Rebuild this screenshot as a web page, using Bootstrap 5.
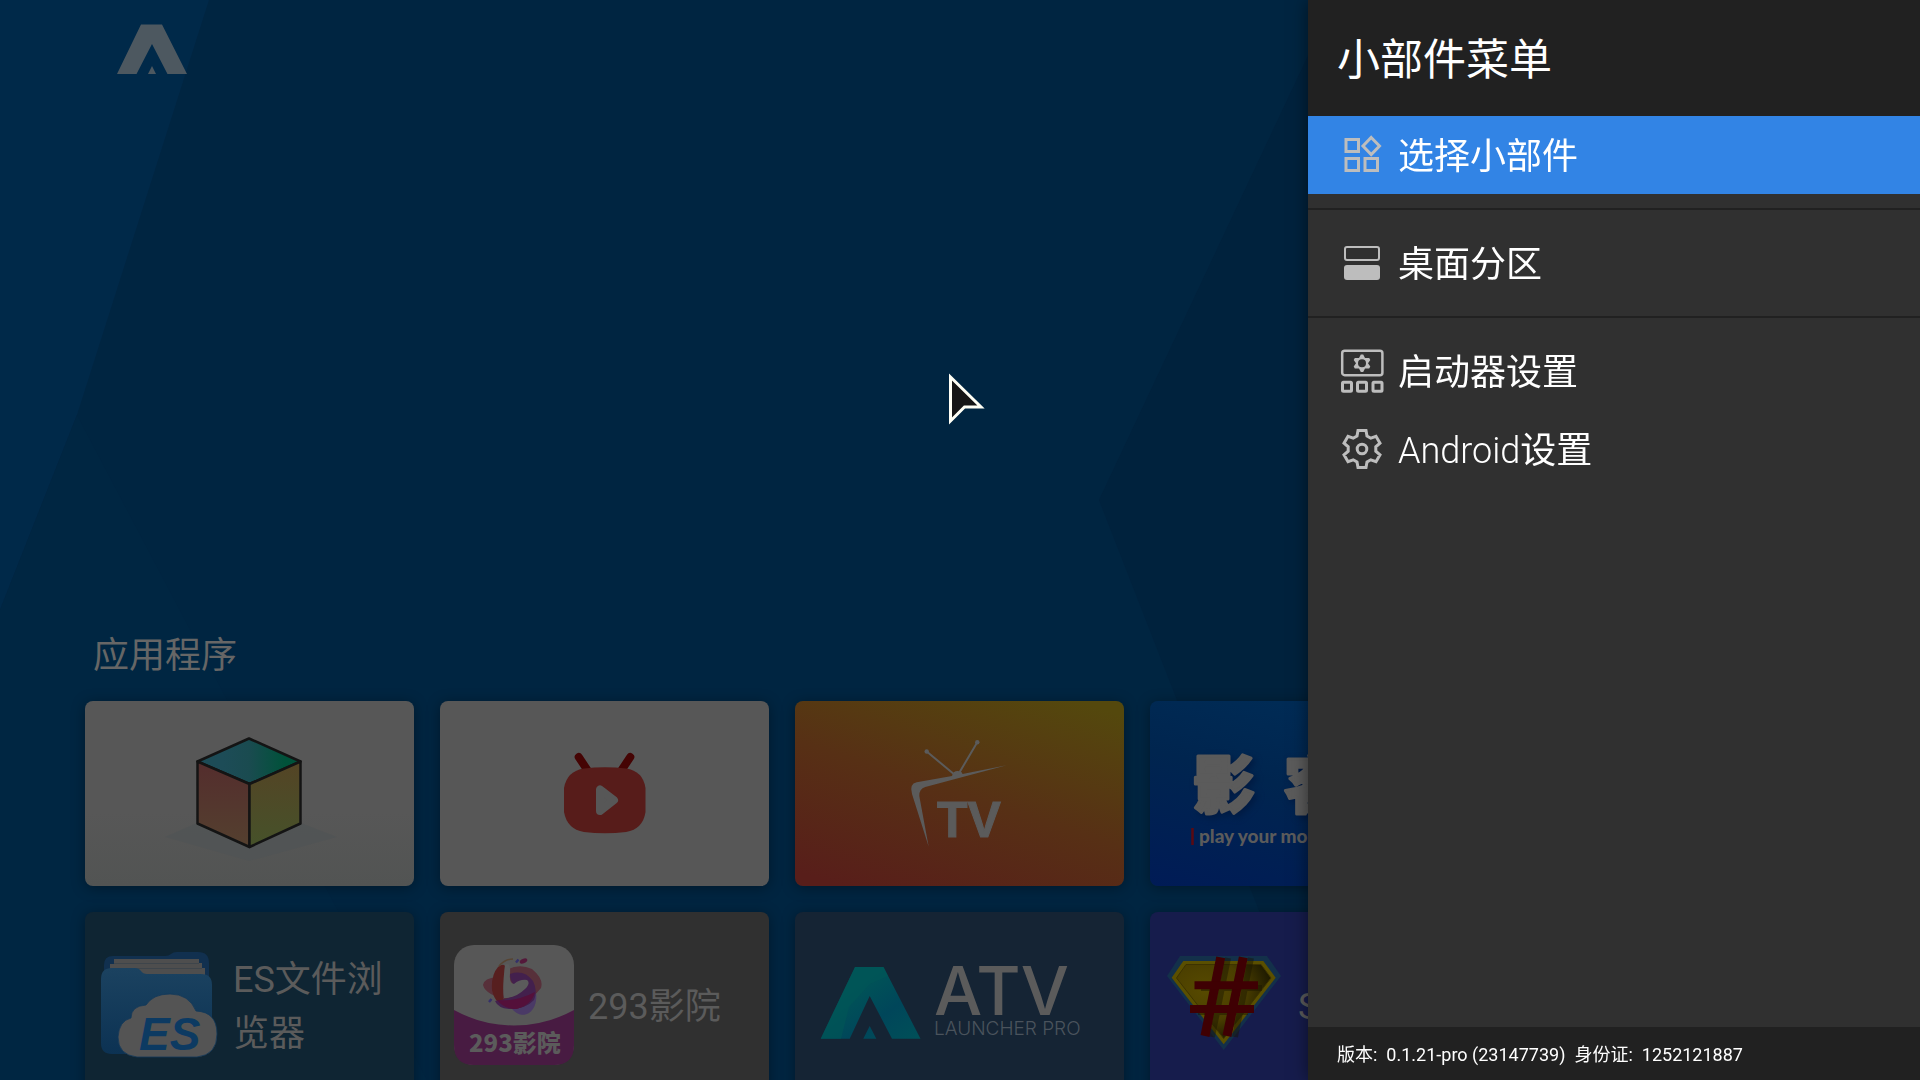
<!DOCTYPE html>
<html lang="zh-CN">
<head>
<meta charset="utf-8">
<meta name="viewport" content="width=device-width, initial-scale=1">
<title>小部件菜单</title>
<link href="https://cdn.jsdelivr.net/npm/bootstrap@5.3.0/dist/css/bootstrap.min.css" rel="stylesheet">
<style>
  body { font-family: Roboto, "Noto Sans CJK SC", sans-serif; background: #002541; color: #5b5b5b; }
  a { color: inherit; text-decoration: none; }
  .wallpaper { z-index: 0; }
  .launcher { z-index: 1; padding: 0 85px; }
  .brand-bar { height: 98px; padding: 24px 32px; }
  .widget-area { height: 531px; }
  .section-title { font-size: 36px; line-height: 54px; margin: 0 0 18px; padding-left: 8px; color: #666; font-weight: 400; }
  .tiles { display: grid; grid-template-columns: repeat(4, 329px); grid-auto-rows: 185px; gap: 26px; }
  .tile { border-radius: 8px; overflow: hidden; box-shadow: 0 2px 14px rgba(0, 0, 0, .35); font-size: 36px; line-height: 54px; }
  .tile-app { padding: 0 14px; gap: 14px; }
  .tile-app span { padding-top: 4px; }
  .tile-cube { background: linear-gradient(#575757 60%, #525453); }
  .tile-video { background: #575757; }
  .tile-tv { background: linear-gradient(18deg, #581e1a 5%, #573015 50%, #54480d 95%); }
  .tile-player { background: linear-gradient(15deg, #001b56, #00254f 50%, #002f59); }
  .tile-es { background: #0f2533; }
  .tile-cinema { background: #303030; }
  .tile-atv { background: #152434; }
  .tile-su { background: #161c4c; }
  .side-menu { z-index: 3; width: 612px; background: #303030; color: #fff; box-shadow: 0 0 16px rgba(0, 0, 0, .5); }
  .side-head { height: 116px; padding: 4px 29px 0; background: #212121; }
  .side-head h1 { font-size: 43px; line-height: 64px; font-weight: 400; margin: 0; }
  .menu-row { height: 78px; padding: 0 29px; gap: 11px; border: 0; background: transparent; color: #fff; font-size: 36px; line-height: 54px; text-align: left; }
  .menu-row > span { padding-top: 4px; }
  .menu-row.selected { background: #3284e5; }
  .menu-row svg { color: #bdbdbd; }
  .menu-line { height: 2px; margin: 14px 0; border: 0; opacity: 1; background: #212121; }
  .side-foot { height: 53px; padding: 2px 29px 0; gap: 9px; background: #212121; font-size: 18px; line-height: 27px; }
  .pointer { z-index: 4; left: 946px; top: 370px; }
  .t-bold { font-family: "Liberation Sans", sans-serif; font-weight: 700; }
  .t-wide { font-family: Inter, sans-serif; }
  .t-cjk { font-family: "Noto Sans CJK SC", sans-serif; font-weight: 900; }
  .t-lato { font-family: Lato, sans-serif; font-weight: 900; }
  .t-shade { filter: drop-shadow(3px 3px 3px #001a42); }
</style>
<script src="https://cdn.jsdelivr.net/npm/bootstrap@5.3.0/dist/js/bootstrap.bundle.min.js"></script>
</head>
<body class="vh-100 overflow-hidden position-relative">

<svg class="wallpaper position-absolute top-0 start-0 w-100 h-100" viewBox="0 0 1920 1080" preserveAspectRatio="xMinYMin slice" aria-hidden="true">
  <path d="M0 0H209L77 415L0 610Z" fill="#002949"/>
  <path d="M77 415L0 610V1080H427Z" fill="#002642"/>
  <path d="M1320 30L1099 500L1325 1080H1920V0Z" fill="#00223d"/>
</svg>

<main class="launcher position-relative">
  <header class="brand-bar">
    <svg class="d-block" width="70" height="50" viewBox="0 0 70 50" role="img" aria-label="ATV Launcher"><path fill="#4d5860" d="M24 .5H45L70 50H50.500L35 20L19.500 50H0ZM35 42L39 50H31Z"/></svg>
  </header>
  <div class="widget-area"></div>
  <section aria-labelledby="apps">
    <h2 class="section-title" id="apps">应用程序</h2>
    <div class="tiles">
      <a href="#" class="tile tile-cube d-block" aria-label="Cube">
        <svg class="d-block" width="329" height="185" viewBox="0 0 329 185">
          <defs>
            <linearGradient id="ct" x1="0" x2="1"><stop offset=".25" stop-color="#1d4c57"/><stop offset=".5" stop-color="#1a4b50"/><stop offset=".85" stop-color="#00523a"/></linearGradient>
            <linearGradient id="cl" x1="0" y1="0" x2="0" y2="1"><stop offset="0" stop-color="#542d2d"/><stop offset="1" stop-color="#54402f"/></linearGradient>
            <linearGradient id="cr" x1="0" y1="0" x2="0" y2="1"><stop offset="0" stop-color="#544425"/><stop offset="1" stop-color="#46522a"/></linearGradient>
          </defs>
          <path d="M80 136L112 122L164 146L216 122L252 136L164 160Z" fill="#505455" opacity=".7"/>
          <g stroke="#141414" stroke-width="2.500" stroke-linejoin="round">
            <path fill="url(#ct)" d="M164 37.500L215.500 60.500L164.500 83L112.500 60.500Z"/>
            <path fill="url(#cl)" d="M112.500 60.500L164.500 83V146L112.500 122.500Z"/>
            <path fill="url(#cr)" d="M215.500 60.500L164.500 83V146L215.500 122.500Z"/>
          </g>
        </svg>
      </a>
      <a href="#" class="tile tile-video d-block" aria-label="Video">
        <svg class="d-block" width="329" height="185" viewBox="0 0 329 185">
          <path d="M138.700 56L148 70M190.300 56L181 70" stroke="#450404" stroke-width="8" stroke-linecap="round"/>
          <path fill="#571c1a" d="M144 67.500Q165 65 186 67.500Q203 70 205.500 87V111Q203 128 186 131Q165 133.500 144 131Q127 128 124 111V87Q127 70 144 67.500Z"/>
          <path fill="#575757" stroke="#575757" stroke-width="8" stroke-linejoin="round" d="M160 88.500V110L174 99.200Z"/>
        </svg>
      </a>
      <a href="#" class="tile tile-tv d-block" aria-label="TV">
        <svg class="d-block" width="329" height="185" viewBox="0 0 329 185" fill="#5b5b5b">
          <path d="M131.700 50.500L160 74M182.300 41.300L163.500 73" stroke="#5b5b5b" stroke-width="2"/>
          <circle cx="131.700" cy="50.500" r="2.200"/><circle cx="182.300" cy="41.300" r="2.200"/>
          <path d="M157 75Q158 70 162.500 70Q167 70 167.500 73L211.700 64.300L130.300 86Q124 88 124.300 95L133.700 145.700L117 93Q114 83 121.700 81.300Z"/>
          <text class="t-bold" x="142" y="136" font-size="50" stroke="#5b5b5b">TV</text>
        </svg>
      </a>
      <a href="#" class="tile tile-player d-block" aria-label="影客">
        <svg class="d-block" width="329" height="185" viewBox="0 0 329 185">
          <g class="t-cjk t-shade" font-size="62" fill="#5b5b5b" stroke="#5b5b5b" stroke-width="3" stroke-linejoin="round"><text x="43" y="107">影</text><text x="134" y="107">客</text></g>
          <path d="M42.500 127V144" stroke="#5a0a12" stroke-width="2.500"/>
          <text class="t-lato" x="49" y="142" font-size="19" fill="#5b5b5b">play your mo</text>
        </svg>
      </a>

      <a href="#" class="tile tile-app tile-es d-flex align-items-center">
        <svg class="flex-shrink-0" width="120" height="120" viewBox="0 0 120 120" aria-hidden="true">
          <defs><linearGradient id="ef" x1="0" y1="0" x2="0" y2="1"><stop offset="0" stop-color="#1b4260"/><stop offset="1" stop-color="#0c3253"/></linearGradient></defs>
          <path fill="#11304f" d="M5 40V20Q5 11 14 11H66Q70 11 72 9Q74 7 78 7H99Q110 7 110 18V60H5Z"/>
          <path fill="#4e4e4e" d="M15 14H100V18H103V23H106V40H11V19H15Z"/>
          <path d="M15 18.500H100M11 23.500H103" stroke="#3e454b" stroke-width="1"/>
          <path fill="url(#ef)" d="M2 34Q2 23 13 23H36Q40 23 42 26Q44 29 48 29H102Q113 29 113 40V98Q113 109 102 109H13Q2 109 2 98Z"/>
          <path fill="#545454" stroke="#12395a" stroke-width=".8" d="M38 112Q19 110 19 92Q20 76 32 73Q32 61 47 60Q54 49 71 49Q90 49 97 66Q118 67 118 89Q118 110 98 112Z"/>
          <text class="t-bold" font-style="italic" x="40" y="105" font-size="46" fill="#0c3a62">ES</text>
        </svg>
        <span>ES文件浏览器</span>
      </a>
      <a href="#" class="tile tile-app tile-cinema d-flex align-items-center">
        <svg class="flex-shrink-0" width="120" height="120" viewBox="0 0 120 120" aria-hidden="true">
          <rect width="120" height="120" rx="20" fill="#575757"/>
          <path fill="#481b42" d="M0 65Q28 80.500 60 80.500T120 65V100Q120 120 100 120H20Q0 120 0 100Z"/>
          <ellipse cx="67" cy="49" rx="15" ry="21" fill="#4a3a66" transform="rotate(-12 67 49)"/>
          <path fill="#57303a" d="M29 40Q30 33 43 32Q60 16 78 24Q90 34 87 43Q80 53 64 57Q32 52 29 40Z"/>
          <path fill="#571f1f" d="M44 22Q49 18 51 21L49 54Q60 54 70 47Q80 40 81 47Q80 60 62 64Q42 64 38 45Q37 30 44 22Z"/>
          <path fill="#43204d" d="M56 29Q70 24 79 36Q84 46 80 55Q72 64 55 64Q44 63 41 56Q60 54 73 40Q68 35 60 40Q56 36 56 29Z"/>
          <path fill="#54103a" d="M43 55Q62 57 81 47Q78 60 62 64Q50 64 43 55Z"/>
          <path fill="#5b5b5b" d="M51 20Q57 16 56 29Q55 38 60 39Q66 34 73 35Q77 38 71 44Q62 53 50 53Q48 44 51 20Z"/>
          <path d="M45 21Q51 14 59 14" stroke="#574432" stroke-width="1.500" fill="none"/>
          <ellipse cx="69.500" cy="16" rx="4" ry="2.300" fill="#54183a" transform="rotate(-25 69.500 16)"/>
          <path d="M62 17.500L64.500 14.500M35 57L37.500 54" stroke="#35306a" stroke-width="2.500"/>
          <text x="15" y="107" class="t-cjk" font-size="24" fill="#5b5b5b">293影院</text>
        </svg>
        <span>293影院</span>
      </a>
      <a href="#" class="tile tile-atv d-block" aria-label="ATV Launcher Pro">
        <svg class="d-block" width="329" height="185" viewBox="0 0 329 185">
          <defs><linearGradient id="al" x1="0" y1="0" x2="1" y2="1"><stop offset=".3" stop-color="#005457"/><stop offset=".65" stop-color="#00465a"/><stop offset="1" stop-color="#005058"/></linearGradient></defs>
          <path fill="url(#al)" d="M60 55H88.500L125.500 126.700H97L74.700 84L54.700 126.700H25.700ZM74.700 114L81.300 126.700H68.300Z"/>
          <path fill="#005656" d="M60 55H88.500L93 64L74.700 72L54 95L46 126.700H25.700Z" opacity=".6"/>
          <text class="t-wide" x="139" y="103" font-size="68" font-weight="500" fill="#5b5b5b">ATV</text>
          <text class="t-wide" x="139" y="123" font-size="19" font-weight="300" fill="#4a535c">LAUNCHER PRO</text>
        </svg>
      </a>
      <a href="#" class="tile tile-app tile-su d-flex align-items-center">
        <svg class="flex-shrink-0" width="120" height="120" viewBox="0 0 120 120" aria-hidden="true">
          <defs><radialGradient id="sg" cx=".3" cy=".35" r=".7"><stop offset="0" stop-color="#574a00"/><stop offset=".6" stop-color="#4a3e00"/><stop offset="1" stop-color="#1f1b00"/></radialGradient></defs>
          <path fill="#13304a" d="M16 11H103L117 31L59.700 105L3 31Z"/>
          <path fill="#5a4f00" d="M19.300 16H99.300L111.700 32.700L59.700 99.300L7.700 32.700Z"/>
          <path fill="url(#sg)" stroke="#3d3300" d="M22 19.500H97L107 33L59.700 93.500L12.500 33Z"/>
          <path d="M64 13L48 92M87 13L71 92M37 43H98M34 67H84" stroke="#1a1500" stroke-width="6" opacity=".45"/>
          <path d="M56.700 12.300L41 91M79.300 12.300L63 91" stroke="#3f0003" stroke-width="9"/>
          <path d="M30.500 40.200H94M26 64H90" stroke="#3f0003" stroke-width="8"/>
        </svg>
        <span>S</span>
      </a>
    </div>
  </section>
</main>

<aside class="side-menu position-fixed top-0 end-0 h-100 d-flex flex-column" aria-label="小部件菜单">
  <div class="side-head d-flex align-items-center"><h1>小部件菜单</h1></div>
  <nav class="flex-grow-1 d-flex flex-column">
    <button type="button" class="menu-row selected d-flex align-items-center w-100">
      <svg width="50" height="50" viewBox="-2 -2 50 50" fill="none" stroke="currentColor" stroke-width="3" aria-hidden="true">
        <path d="M7 7.500H19.500V19.500H7ZM7 26.500H19.500V38.500H7ZM26 26.500H38.500V38.500H26ZM32.200 5.500L40.500 14L32.200 22.500L24 14Z"/>
      </svg>
      <span>选择小部件</span>
    </button>
    <hr class="menu-line">
    <button type="button" class="menu-row d-flex align-items-center w-100">
      <svg width="50" height="50" viewBox="-2 -2 50 50" aria-hidden="true"><rect x="6" y="7" width="34" height="13" rx="2" fill="none" stroke="currentColor" stroke-width="2"/><rect x="5" y="25" width="36" height="15" rx="3" fill="currentColor"/></svg>
      <span>桌面分区</span>
    </button>
    <hr class="menu-line">
    <button type="button" class="menu-row d-flex align-items-center w-100">
      <svg width="50" height="50" viewBox="-2 -2 50 50" fill="none" stroke="currentColor" aria-hidden="true">
        <rect x="3.200" y="2.700" width="40.200" height="24.500" rx="2.500" stroke-width="2.500"/>
        <g stroke-width="3"><rect x="3.500" y="34.300" width="9" height="9" rx="1"/><rect x="18.500" y="34.300" width="9" height="9" rx="1"/><rect x="34" y="34.300" width="9" height="9" rx="1"/></g>
        <path transform="translate(23 15.300)" fill="currentColor" fill-rule="evenodd" stroke="none" d="M-1.200-8.800H1.200L3-5.200L7.200-5.200L8.300-3.200L6 0L8.300 3.200L7.200 5.200L3 5.200L1.200 8.800H-1.200L-3 5.200L-7.200 5.200L-8.300 3.200L-6 0L-8.300-3.200L-7.200-5.200L-3-5.200ZM0-4A4 4 0 1 0 0 4A4 4 0 1 0 0-4Z"/>
      </svg>
      <span>启动器设置</span>
    </button>
    <button type="button" class="menu-row d-flex align-items-center w-100">
      <svg width="50" height="50" viewBox="-25 -25 50 50" fill="none" stroke="currentColor" stroke-width="3" aria-hidden="true">
        <path d="M-5-13L-4-18.500H4L5-13L8.800-10.800L14-12.700L18-5.800L13.800-2.200V2.200L18 5.800L14 12.700L8.800 10.800L5 13L4 18.500H-4L-5 13L-8.800 10.800L-14 12.700L-18 5.800L-13.800 2.200V-2.200L-18-5.800L-14-12.700L-8.800-10.800Z"/><circle r="4.800"/>
      </svg>
      <span><span class="fw-light">Android</span>设置</span>
    </button>
  </nav>
  <footer class="side-foot d-flex align-items-center"><span>版本:</span><span>0.1.21-pro (23147739)</span><span>身份证:</span><span>1252121887</span></footer>
</aside>

<svg class="pointer position-absolute" width="44" height="60" viewBox="0 0 44 60" aria-hidden="true"><path d="M4.500 7L35 37H18.500L4.500 51Z" fill="#161616" stroke="#fffff5" stroke-width="3"/></svg>
</body>
</html>
